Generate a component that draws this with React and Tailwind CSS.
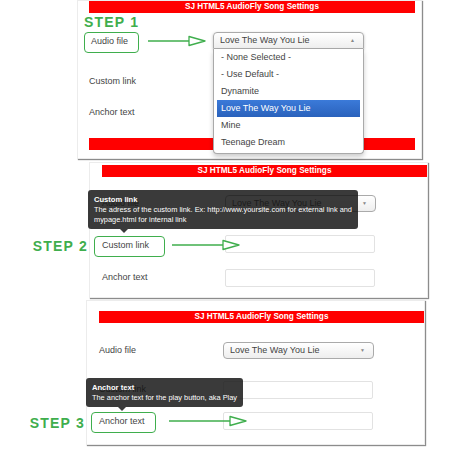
import React from "react";

const GREEN = "#3fae4d";

const Arrow = ({ className, width = 58 }) => (
  <svg className={className} width={width} height="12" viewBox={`0 0 ${width} 12`}>
    <line x1="0" y1="6" x2={width - 16} y2="6" stroke={GREEN} strokeWidth="1.6" />
    <polygon
      points={`${width - 17},1.5 ${width - 1},6 ${width - 17},10.5`}
      fill="white"
      stroke={GREEN}
      strokeWidth="1.3"
      strokeLinejoin="round"
    />
  </svg>
);

const RedBar = ({ className, children }) => (
  <div
    className={`h-[12px] bg-[#ff0000] text-white font-bold text-[8.2px] leading-[12px] text-center ${className}`}
  >
    {children}
  </div>
);

const Select = ({ open, className }) => (
  <div
    className={`h-[17px] w-[151px] border border-[#aaa] bg-gradient-to-b from-white to-[#eee] flex items-center justify-between pl-[6px] pr-[8px] text-[9px] text-[#444] ${
      open ? "rounded-t-[4px] shadow-[0_1px_3px_rgba(0,0,0,0.25)]" : "rounded-[4px]"
    } ${className || ""}`}
  >
    <span>Love The Way You Lie</span>
    <span className="text-[5px] text-[#888]">{open ? "▲" : "▼"}</span>
  </div>
);

const Input = ({ className }) => (
  <div className={`h-[18px] w-[150px] border border-[#e2e2e2] bg-white rounded-[2px] ${className || ""}`} />
);

const StepLabel = ({ children, className }) => (
  <div
    className={`text-[14px] leading-[14px] font-bold tracking-[1.2px] whitespace-nowrap ${className || ""}`}
    style={{ color: GREEN }}
  >
    {children}
  </div>
);

const BoxLabel = ({ children, className }) => (
  <div
    className={`h-[21px] border-[1.5px] rounded-[4px] bg-white text-[9px] text-[#444] pl-[6px] pt-[2px] leading-[13px] whitespace-nowrap ${className || ""}`}
    style={{ borderColor: GREEN }}
  >
    {children}
  </div>
);

const Tooltip = ({ title, lines, className, pointer }) => (
  <div
    className={`absolute bg-[rgba(20,20,20,0.84)] rounded-[3px] text-white px-[6px] pt-[5px] pb-[4px] z-10 ${className}`}
  >
    <div className="font-bold text-[7.6px] leading-[10px]">{title}</div>
    {lines.map((l) => (
      <div key={l} className="text-[7.4px] leading-[10px] whitespace-nowrap">
        {l}
      </div>
    ))}
    <div
      className="absolute top-full w-0 h-0 border-l-[4px] border-r-[4px] border-t-[4px] border-l-transparent border-r-transparent border-t-[rgba(20,20,20,0.84)]"
      style={{ left: pointer }}
    />
  </div>
);

const panel =
  "relative bg-white border border-[#ececec] shadow-[1px_1px_1px_rgba(0,0,0,0.45)]";

export default function App() {
  return (
    <div
      className="w-[452px] h-[452px] overflow-hidden bg-white flex flex-col text-[#444]"
      style={{ fontFamily: '"Liberation Sans", Arial, sans-serif' }}
    >
      {/* Panel 1 */}
      <div className={`${panel} ml-[77px] w-[345px] h-[159px] shrink-0`}>
        <RedBar className="ml-[11px] mr-[6px]">SJ HTML5 AudioFly Song Settings</RedBar>
        <StepLabel className="ml-[6px] mt-[2px]">STEP 1</StepLabel>
        <div className="relative flex items-start mt-[3px] ml-[6px]">
          <BoxLabel className="w-[55px]">Audio file</BoxLabel>
          <Arrow className="mt-[3px] ml-[9px]" width={58} />
          <div className="relative ml-[7px]">
            <Select open />
            <div className="absolute top-[17px] left-0 w-[151px] bg-white border border-[#aaa] border-t-0 rounded-b-[4px] shadow-[0_3px_5px_rgba(0,0,0,0.2)] px-[3px] pb-[2px] z-10 text-[9px] text-[#444]">
              {["- None Selected -", "- Use Default -", "Dynamite", "Love The Way You Lie", "Mine", "Teenage Dream"].map(
                (o) => (
                  <div
                    key={o}
                    className={`h-[17px] leading-[17px] pl-[4px] ${
                      o === "Love The Way You Lie"
                        ? "bg-gradient-to-b from-[#3b7ad9] to-[#2a62bc] text-white"
                        : ""
                    }`}
                  >
                    {o}
                  </div>
                )
              )}
            </div>
          </div>
        </div>
        <div className="flex items-center mt-[20px] ml-[11px]">
          <div className="w-[124px] text-[9px]">Custom link</div>
          <Input />
        </div>
        <div className="flex items-center mt-[13px] ml-[11px]">
          <div className="w-[124px] text-[9px]">Anchor text</div>
          <Input />
        </div>
        <RedBar className="mt-[16px] ml-[11px] mr-[6px]" />
      </div>

      {/* Panel 2 */}
      <div className={`${panel} ml-[89px] mt-[3px] w-[339px] h-[136px] shrink-0`}>
        <RedBar className="mt-[2px] ml-[12px]">SJ HTML5 AudioFly Song Settings</RedBar>
        <Tooltip
          className="left-[-2px] top-[27px]"
          pointer="32px"
          title="Custom link"
          lines={[
            "The adress of the custom link. Ex: http://www.yoursite.com for external link and",
            "mypage.html for internal link",
          ]}
        />
        <div className="flex items-center mt-[18px] ml-[12px]">
          <div className="w-[123px] text-[9px]">Audio file</div>
          <Select />
        </div>
        <div className="relative flex items-start mt-[23px] ml-[12px]">
          <StepLabel className="absolute right-full mr-[14px] top-[4px]">STEP 2</StepLabel>
          <BoxLabel className="w-[71px] ml-[-8px] mt-[1px] pl-[7px]">Custom link</BoxLabel>
          <Arrow className="absolute left-[70px] top-[4px] z-10" width={68} />
          <Input className="ml-[60px]" />
        </div>
        <div className="flex items-center mt-[12px] ml-[12px]">
          <div className="w-[123px] text-[9px]">Anchor text</div>
          <Input />
        </div>
      </div>

      {/* Panel 3 */}
      <div className={`${panel} ml-[86px] mt-[2px] w-[339px] h-[145px] shrink-0`}>
        <RedBar className="mt-[10px] ml-[12px]">SJ HTML5 AudioFly Song Settings</RedBar>
        <Tooltip
          className="left-[-1px] top-[77px]"
          pointer="32px"
          title="Anchor text"
          lines={["The anchor text for the play button, aka Play"]}
        />
        <div className="flex items-center mt-[19px] ml-[12px]">
          <div className="w-[124px] text-[9px]">Audio file</div>
          <Select />
        </div>
        <div className="flex items-center mt-[22px] ml-[12px]">
          <div className="w-[124px] text-[9px]">Custom link</div>
          <Input />
        </div>
        <div className="relative flex items-start mt-[13px] ml-[12px]">
          <StepLabel className="absolute right-full mr-[14px] top-[4px]">STEP 3</StepLabel>
          <BoxLabel className="w-[65px] ml-[-8px] pl-[7px]">Anchor text</BoxLabel>
          <Arrow className="absolute left-[70px] top-[3px] z-10" width={78} />
          <Input className="ml-[67px]" />
        </div>
      </div>
    </div>
  );
}
